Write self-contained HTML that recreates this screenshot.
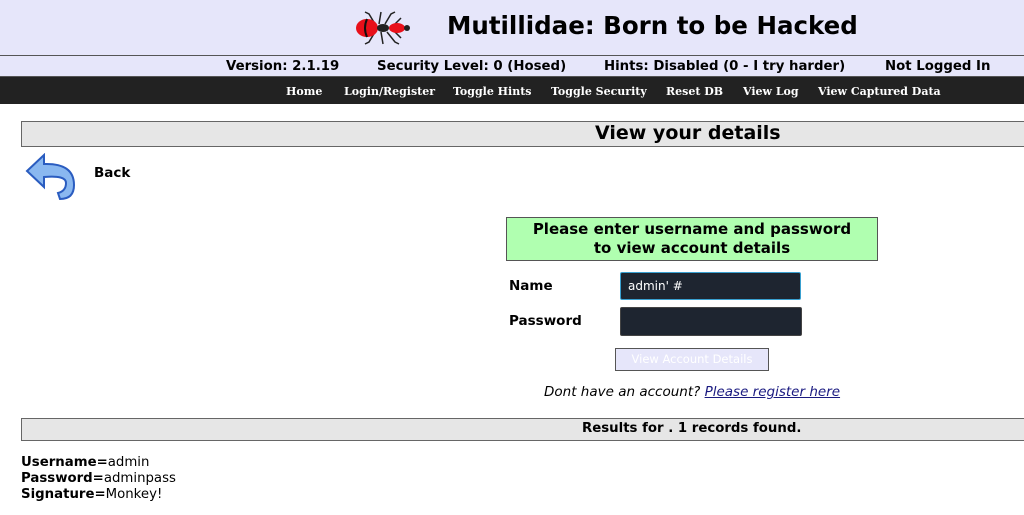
<!DOCTYPE html><html><head><style>
body{margin:0;width:1024px;height:515px;overflow:hidden;background:#fff;font-family:"DejaVu Sans","Liberation Sans",sans-serif;position:relative}
.a{position:absolute}
</style></head><body>
<div class="a" style="left:0;top:0;width:1024px;height:55px;background:#e6e6fa;border-bottom:1px solid #555"></div>
<svg class="a" style="left:355px;top:8px" width="64" height="40" viewBox="0 0 64 40">
<g stroke="#222" stroke-width="1.5" fill="none"><path d="M20 16 L14 6 L10 4M24 16 L26 4M30 16 L36 6 L40 4M20 24 L14 34 L10 36M26 24 L28 36M32 24 L40 34 L44 36M40 16 L46 10M40 24 L46 30"/></g>
<ellipse cx="12" cy="20" rx="11" ry="9" fill="#e8101a"/><path d="M12 11 Q8 20 12 29" stroke="#111" stroke-width="2" fill="none"/>
<ellipse cx="28" cy="20" rx="6" ry="4" fill="#222"/><ellipse cx="42" cy="20" rx="8" ry="5" fill="#e8101a"/><circle cx="52" cy="20" r="3" fill="#222"/></svg>
<div class="a" style="left:447px;top:11px;font-size:24.5px;font-weight:bold;color:#000">Mutillidae: Born to be Hacked</div>
<div class="a" style="left:0;top:56px;width:1024px;height:20px;background:#e6e6fa;border-bottom:1px solid #555"></div>
<div class="a" style="top:59px;font-size:13.3px;font-weight:bold;left:226px">Version: 2.1.19</div>
<div class="a" style="top:59px;font-size:13.3px;font-weight:bold;left:377px">Security Level: 0 (Hosed)</div>
<div class="a" style="top:59px;font-size:13.3px;font-weight:bold;left:604px">Hints: Disabled (0 - I try harder)</div>
<div class="a" style="top:59px;font-size:13.3px;font-weight:bold;left:885px">Not Logged In</div>
<div class="a" style="left:0;top:77px;width:1024px;height:27px;background:#222"></div>
<div class="a" style="top:85px;color:#fff;font:bold 11px 'DejaVu Serif','Liberation Serif',serif;left:0;width:1024px">
<span class="a" style="left:286px">Home</span><span class="a" style="left:344px">Login/Register</span><span class="a" style="left:453px">Toggle Hints</span><span class="a" style="left:551px">Toggle Security</span><span class="a" style="left:666px">Reset DB</span><span class="a" style="left:743px">View Log</span><span class="a" style="left:818px">View Captured Data</span></div>
<div class="a" style="left:21px;top:121px;width:1010px;height:24px;background:#e6e6e6;border:1px solid #666"></div>
<div class="a" style="left:595px;top:122px;font-size:19px;font-weight:bold">View your details</div>
<svg class="a" style="left:24px;top:153px" width="54" height="48" viewBox="0 0 54 48"><path d="M3 18 L20 2 L20 11 Q50 10 50 32 Q50 46 36 46 L34 40 Q42 38 42 30 Q42 22 20 24 L20 34 Z" fill="#8ab8f0" stroke="#2a5cc0" stroke-width="2"/></svg>
<div class="a" style="left:94px;top:165px;font-size:13.5px;font-weight:bold">Back</div>
<div class="a" style="left:506px;top:217px;width:370px;height:42px;background:#b0ffb0;border:1px solid #555"></div>
<div class="a" style="left:506px;top:220px;width:372px;text-align:center;font-size:15px;font-weight:bold;line-height:19px">Please enter username and password<br>to view account details</div>
<div class="a" style="left:509px;top:278px;font-size:13.5px;font-weight:bold">Name</div>
<div class="a" style="left:509px;top:313px;font-size:13.5px;font-weight:bold">Password</div>
<div class="a" style="left:620px;top:272px;width:179px;height:26px;background:#1e2530;border:1px solid #39a0d0;border-radius:2px"></div>
<div class="a" style="left:628px;top:279px;font-size:12px;color:#fff">admin' #</div>
<div class="a" style="left:620px;top:307px;width:180px;height:27px;background:#1e2530;border:1px solid #444;border-radius:2px"></div>
<div class="a" style="left:615px;top:348px;width:152px;height:21px;background:#e6e6fa;border:1px solid #555;color:#fff;font-size:11.5px;text-align:center;line-height:21px">View Account Details</div>
<div class="a" style="left:544px;top:384px;font-size:13.5px;font-style:italic">Dont have an account? <span style="color:#1a1a80;text-decoration:underline">Please register here</span></div>
<div class="a" style="left:21px;top:418px;width:1010px;height:21px;background:#e6e6e6;border:1px solid #666"></div>
<div class="a" style="left:582px;top:421px;font-size:13.3px;font-weight:bold">Results for . 1 records found.</div>
<div class="a" style="left:21px;top:455px;font-size:13.3px;line-height:16px"><b>Username=</b>admin<br><b>Password=</b>adminpass<br><b>Signature=</b>Monkey!</div>
</body></html>
